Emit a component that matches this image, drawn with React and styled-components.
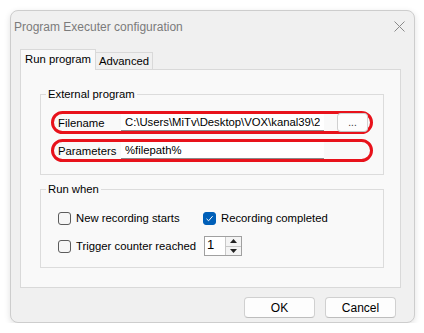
import styled, { createGlobalStyle } from "styled-components";

const Global = createGlobalStyle`
  html, body {
    margin: 0;
    padding: 0;
    background: #ffffff;
  }
  body {
    font-family: "Liberation Sans", Arial, sans-serif;
    font-size: 11.3px;
    color: #000;
  }
`;

const App = () => {
  return (
    <>
      <Global />
      <Window>
        <TitleBar>
          <Title>Program Executer configuration</Title>
          <Close>
            <svg width="11" height="11" viewBox="0 0 11 11">
              <path d="M0.5 0.5L10.5 10.5M10.5 0.5L0.5 10.5" stroke="#8a8a8a" strokeWidth="1" fill="none" />
            </svg>
          </Close>
        </TitleBar>
        <Tabs>
          <Tab $active $w={76}>Run program</Tab>
          <Tab $w={57}>Advanced</Tab>
        </Tabs>
        <Panel>
          <Group>
            <Legend>External program</Legend>
            <GroupBody $pad="10px 0 12px 10px" $gap={5}>
              <FieldRow>
                <FieldLabel>Filename</FieldLabel>
                <TextBox defaultValue="C:\Users\MiTv\Desktop\VOX\kanal39\2025" />
                <Browse>...</Browse>
              </FieldRow>
              <FieldRow>
                <FieldLabel>Parameters</FieldLabel>
                <TextBox defaultValue="%filepath%" />
              </FieldRow>
            </GroupBody>
          </Group>
          <Group>
            <Legend>Run when</Legend>
            <GroupBody $pad="12px 0 11px 17px">
              <CheckGrid>
                <Check>
                  <Box />
                  New recording starts
                </Check>
                <Check>
                  <Box $checked>
                    <svg width="9" height="9" viewBox="0 0 9 9">
                      <path d="M1.5 4.8L3.6 6.8L7.6 2.2" stroke="#fff" strokeWidth="1" fill="none" />
                    </svg>
                  </Box>
                  Recording completed
                </Check>
                <Check>
                  <Box />
                  Trigger counter reached
                </Check>
                <Spin>
                  <SpinValue>1</SpinValue>
                  <SpinButtons>
                    <SpinBtn>
                      <svg width="7" height="4" viewBox="0 0 7 4">
                        <path d="M3.5 0L7 4H0Z" fill="#222" />
                      </svg>
                    </SpinBtn>
                    <SpinBtn>
                      <svg width="7" height="4" viewBox="0 0 7 4">
                        <path d="M0 0H7L3.5 4Z" fill="#222" />
                      </svg>
                    </SpinBtn>
                  </SpinButtons>
                </Spin>
              </CheckGrid>
            </GroupBody>
          </Group>
        </Panel>
        <Footer>
          <Button>OK</Button>
          <Button>Cancel</Button>
        </Footer>
      </Window>
    </>
  );
};

export default App;

const Window = styled.div`
  margin: 10px 0 0 10px;
  width: 405px;
  height: 313px;
  box-sizing: border-box;
  background: #f0f0f0;
  border: 1px solid #cdcdcd;
  border-radius: 8px;
  box-shadow: 0 2px 6px rgba(0, 0, 0, 0.12);
  display: flex;
  flex-direction: column;
  overflow: hidden;
`;

const TitleBar = styled.div`
  height: 29px;
  display: flex;
  align-items: center;
  justify-content: space-between;
  padding: 0 9px 0 3px;
`;

const Title = styled.div`
  color: #7b7b7b;
  font-size: 12px;
  margin-top: 2px;
`;

const Close = styled.div`
  display: flex;
  margin-top: 2px;
  svg {
    display: block;
  }
`;

const Tabs = styled.div`
  display: flex;
  align-items: flex-end;
  margin: 9px 0 0 9px;
  height: 21px;
  position: relative;
  z-index: 1;
  margin-bottom: -1px;
`;

const Tab = styled.div`
  width: ${(p) => p.$w}px;
  box-sizing: border-box;
  height: ${(p) => (p.$active ? 21 : 18)}px;
  border: 1px solid #d9d9d9;
  border-bottom: ${(p) => (p.$active ? "none" : "1px solid #d9d9d9")};
  border-left: ${(p) => (p.$active ? "1px solid #d9d9d9" : "none")};
  background: ${(p) => (p.$active ? "#f9f9f9" : "#f0f0f0")};
  display: flex;
  align-items: center;
  justify-content: center;
  white-space: nowrap;
  padding-bottom: ${(p) => (p.$active ? 2 : 0)}px;
`;

const Panel = styled.div`
  margin-left: 9px;
  width: 381px;
  height: 219px;
  box-sizing: border-box;
  background: #f9f9f9;
  border: 1px solid #d9d9d9;
  padding: 17px 0 0 19px;
  display: flex;
  flex-direction: column;
  gap: 7px;
`;

const Group = styled.fieldset`
  margin: 0;
  width: 344px;
  box-sizing: border-box;
  border: 1px solid #dcdcdc;
  padding: 0;
`;

const GroupBody = styled.div`
  padding: ${(p) => p.$pad};
  display: flex;
  flex-direction: column;
  gap: ${(p) => p.$gap || 0}px;
`;

const Legend = styled.legend`
  padding: 0 2px;
  margin-left: 5px;
  line-height: 14px;
`;

const FieldRow = styled.div`
  width: 322px;
  height: 23px;
  box-sizing: border-box;
  border: 3px solid #e8121b;
  border-radius: 12px;
  display: flex;
  align-items: center;
`;

const FieldLabel = styled.div`
  width: 67px;
  padding-left: 4px;
  box-sizing: border-box;
`;

const TextBox = styled.input`
  width: 203px;
  height: 17px;
  box-sizing: border-box;
  border: none;
  border-bottom: 1px solid #8a8a8a;
  background: #ffffff;
  font: inherit;
  padding: 0 4px 1px;
  margin: 0;
  outline: none;
  color: #000;
`;

const Browse = styled.div`
  margin-left: 13px;
  width: 31px;
  height: 19px;
  box-sizing: border-box;
  background: #fdfdfd;
  border: 1px solid #d0d0d0;
  border-bottom-color: #c0c0c0;
  border-radius: 4px;
  display: flex;
  align-items: center;
  justify-content: center;
  font-size: 10px;
  color: #333;
`;

const CheckGrid = styled.div`
  display: grid;
  grid-template-columns: 145px auto;
  grid-auto-rows: 20px;
  row-gap: 8px;
  align-items: center;
`;

const Check = styled.div`
  display: flex;
  align-items: center;
  gap: 5px;
  white-space: nowrap;
`;

const Box = styled.div`
  width: 13px;
  height: 13px;
  flex: none;
  box-sizing: border-box;
  border-radius: 3px;
  border: 1px solid ${(p) => (p.$checked ? "#005fb8" : "#5c5c5c")};
  background: ${(p) => (p.$checked ? "#005fb8" : "#f6f6f6")};
  display: flex;
  align-items: center;
  justify-content: center;
  svg {
    display: block;
  }
`;

const Spin = styled.div`
  margin-left: 1px;
  width: 38px;
  height: 20px;
  box-sizing: border-box;
  border: 1px solid #a0a0a0;
  background: #ffffff;
  display: flex;
`;

const SpinValue = styled.div`
  flex: 1;
  padding-left: 2px;
  font-size: 13px;
  line-height: 16px;
`;

const SpinButtons = styled.div`
  width: 15px;
  display: flex;
  flex-direction: column;
  border-left: 1px solid #c8c8c8;
`;

const SpinBtn = styled.div`
  flex: 1;
  display: flex;
  align-items: center;
  justify-content: center;
  background: #f4f4f4;
  & + & {
    border-top: 1px solid #c8c8c8;
  }
`;

const Footer = styled.div`
  display: flex;
  justify-content: flex-end;
  gap: 10px;
  padding: 9px 18px 0 0;
`;

const Button = styled.div`
  width: 71px;
  height: 21px;
  box-sizing: border-box;
  background: #fdfdfd;
  border: 1px solid #d0d0d0;
  border-bottom-color: #bdbdbd;
  border-radius: 4px;
  display: flex;
  align-items: center;
  justify-content: center;
  font-size: 12px;
`;
